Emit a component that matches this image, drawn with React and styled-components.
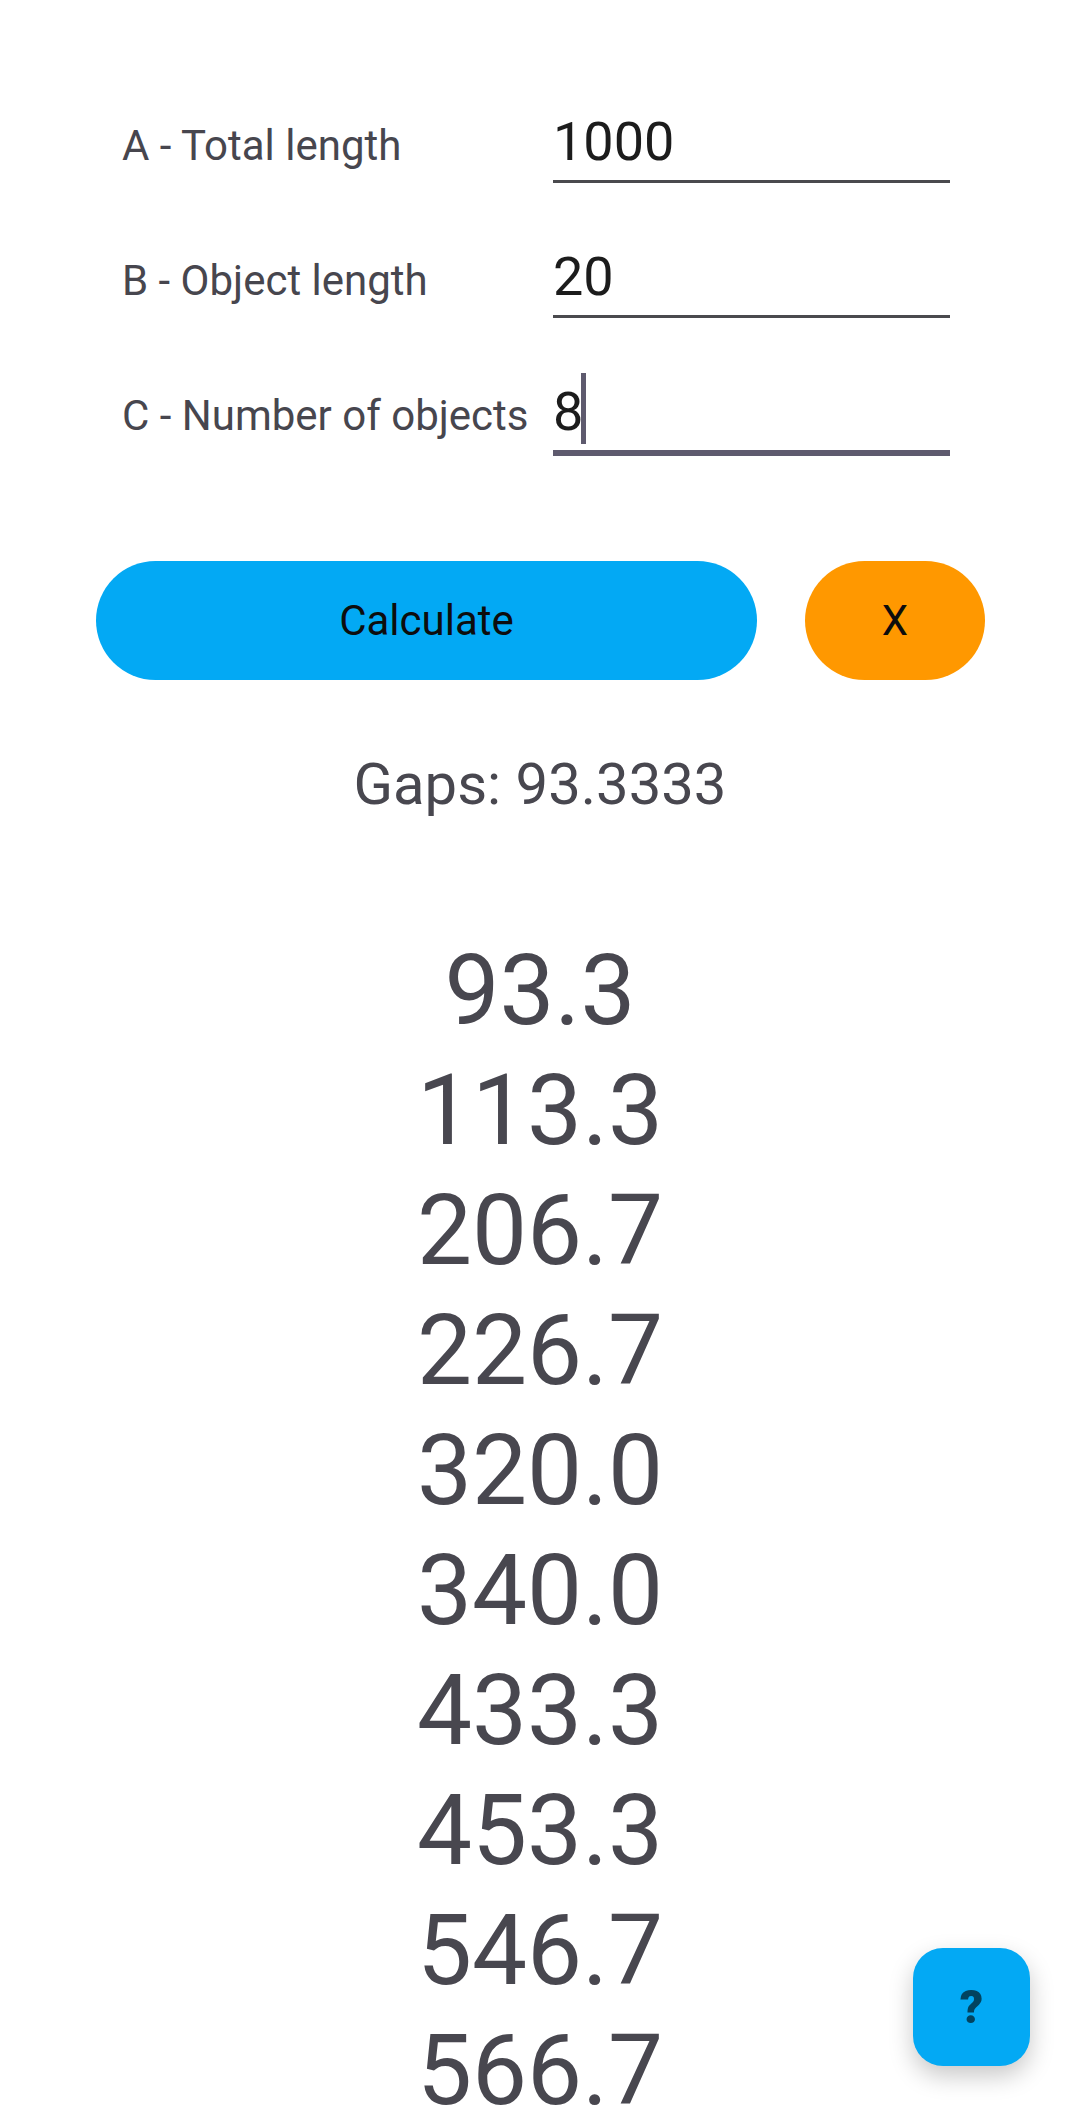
import { Fragment, useState } from "react";
import styled, { createGlobalStyle } from "styled-components";

const GlobalStyle = createGlobalStyle`
  html, body {
    margin: 0;
    padding: 0;
    background: #ffffff;
  }
  body {
    font-family: Roboto, "Noto Sans", Arial, sans-serif;
  }
`

const Screen = styled.div`
  height: 100vh;
  overflow-y: auto;
  scrollbar-width: none;
  &::-webkit-scrollbar {
    display: none;
  }
`
const Form = styled.div`
  display: grid;
  grid-template-columns: 431px 397px;
  row-gap: 55px;
  align-items: baseline;
  padding: 103px 0 0 122px;
`
const Label = styled.label`
  font-size: 42px;
  color: #47464e;
  white-space: nowrap;
`
const FieldWrap = styled.div`
  position: relative;
`
const Input = styled.input`
  display: block;
  box-sizing: content-box;
  width: 100%;
  height: 77px;
  margin: 0;
  padding: 0;
  border: none;
  border-bottom: ${props => (props.$focused ? "6px solid #5e5a6e" : "3px solid #4a4a4e")};
  outline: none;
  background: transparent;
  font-family: Roboto, sans-serif;
  font-size: 54px;
  color: #1c1c1c;
  caret-color: transparent;
`
const Caret = styled.span`
  position: absolute;
  top: 0;
  left: calc(${props => props.$chars} * 0.5615em - 2px);
  width: 5px;
  height: 71px;
  font-size: 54px;
  background: #5e5a6e;
  pointer-events: none;
`
const ButtonRow = styled.div`
  display: flex;
  gap: 48px;
  padding: 0 95px 0 96px;
  margin-top: 105px;
`
const PillButton = styled.button`
  flex: ${props => (props.$grow ? 1 : "0 0 180px")};
  height: 119px;
  border: none;
  border-radius: 60px;
  background: ${props => props.$color};
  font-family: Roboto, sans-serif;
  font-size: 42px;
  color: #0d0d0d;
  cursor: pointer;
`
const GapsText = styled.div`
  margin-top: 70px;
  text-align: center;
  font-size: 58px;
  line-height: 68px;
  color: #48474f;
`
const Positions = styled.div`
  margin-top: 113px;
  text-align: center;
  font-size: 98px;
  line-height: 120px;
  color: #48474f;
`
const HelpButton = styled.button`
  position: fixed;
  right: 50px;
  bottom: 49px;
  width: 117px;
  height: 118px;
  border: none;
  border-radius: 30px;
  background: #03a9f4;
  box-shadow: 0 10px 24px rgba(0, 0, 0, 0.22);
  font-family: Roboto, sans-serif;
  font-weight: 900;
  font-size: 46px;
  color: #02435f;
  cursor: pointer;
`

const calc = (a, b, c) => {
  const total = parseFloat(a)
  const obj = parseFloat(b)
  const n = parseInt(c, 10)
  if (!(total > 0) || !(obj >= 0) || !(n > 0)) return null
  const gap = (total - obj * n) / (n + 1)
  const list = []
  for (let i = 0; i < n; i++) {
    const start = gap * (i + 1) + obj * i
    list.push(start.toFixed(1))
    list.push((start + obj).toFixed(1))
  }
  return { gap: parseFloat(gap.toFixed(4)), list }
}

const fields = [
  { key: "a", label: "A - Total length" },
  { key: "b", label: "B - Object length" },
  { key: "c", label: "C - Number of objects" },
]

const App = () => {
  const [values, setValues] = useState({ a: "1000", b: "20", c: "8" })
  const [focused, setFocused] = useState(2)
  const [result, setResult] = useState(() => calc("1000", "20", "8"))

  return (
    <Screen>
      <GlobalStyle />
      <Form>
        {fields.map((f, i) => (
          <Fragment key={f.key}>
            <Label htmlFor={f.key}>{f.label}</Label>
            <FieldWrap>
              <Input
                id={f.key}
                inputMode="numeric"
                value={values[f.key]}
                $focused={focused === i}
                onFocus={() => setFocused(i)}
                onChange={e => setValues({ ...values, [f.key]: e.target.value })}
              />
              {focused === i && <Caret $chars={values[f.key].length} />}
            </FieldWrap>
          </Fragment>
        ))}
      </Form>
      <ButtonRow>
        <PillButton $grow $color="#03a9f4" onClick={() => setResult(calc(values.a, values.b, values.c))}>
          Calculate
        </PillButton>
        <PillButton
          $color="#ff9800"
          onClick={() => {
            setValues({ a: "", b: "", c: "" })
            setResult(null)
          }}
        >
          X
        </PillButton>
      </ButtonRow>
      {result && (
        <>
          <GapsText>Gaps: {result.gap}</GapsText>
          <Positions>
            {result.list.map((v, i) => (
              <div key={i}>{v}</div>
            ))}
          </Positions>
        </>
      )}
      <HelpButton>?</HelpButton>
    </Screen>
  )
}

export default App
